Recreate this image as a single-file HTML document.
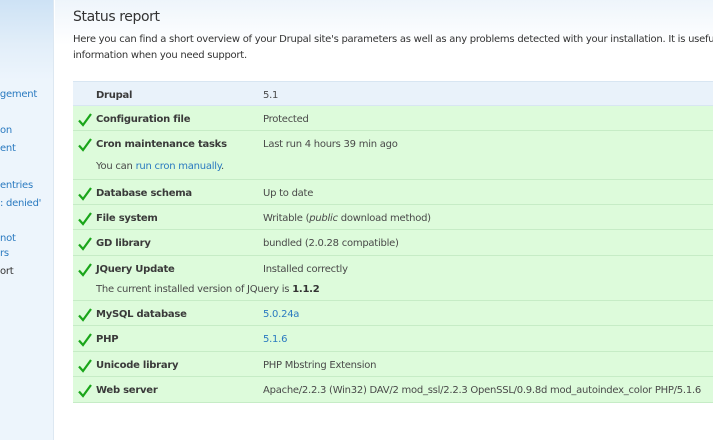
<!DOCTYPE html>
<html><head><meta charset="utf-8"><style>
*{margin:0;padding:0;box-sizing:border-box}
body{width:713px;height:440px;overflow:hidden;background:#fff;font-family:"DejaVu Sans",Verdana,sans-serif;font-size:10px;letter-spacing:-0.25px;color:#494949;position:relative}
#side{position:absolute;left:0;top:0;width:54px;height:440px;background:linear-gradient(#cde2f5 0,#e2eef9 45px,#edf5fc 80px);border-right:1px solid #dde8f2;overflow:hidden}
#side a{position:absolute;left:0;color:#2a7ac0;text-decoration:none;white-space:nowrap}
#main{position:absolute;left:55px;top:0;right:0;height:440px;background:linear-gradient(#eef5fb 0,#fff 45px)}
h1{position:absolute;left:73px;top:9px;font-size:14px;letter-spacing:-0.4px;font-weight:normal;color:#333;white-space:nowrap}
.p{position:absolute;left:73px;white-space:nowrap;color:#333}
.r{position:absolute;left:73px;width:640px;background:#ddfbdb;border-bottom:1px solid #c6ecc6;overflow:hidden}
.r b{position:absolute;left:23px;top:8px;color:#3a3a3a}
.r span.v{position:absolute;left:190px;top:8px;color:#494949;white-space:nowrap}
.r .x{position:absolute;left:23px;top:31px;color:#494949;white-space:nowrap}
.r svg{position:absolute;left:4px;top:6px}
a.l{color:#2a7ac0;text-decoration:none}
</style></head><body>
<div id="side">
<a style="top:89px;left:-6px">agement</a>
<a style="top:125px">on</a>
<a style="top:143px">ent</a>
<a style="top:180px">entries</a>
<a style="top:198px">: denied'</a>
<a style="top:233px">not</a>
<a style="top:248px">rs</a>
<a style="top:266px;color:#333">ort</a>
</div>
<div id="main"></div>
<h1>Status report</h1>
<div class="p" style="top:34px">Here you can find a short overview of your Drupal site's parameters as well as any problems detected with your installation. It is useful</div>
<div class="p" style="top:50px">information when you need support.</div>

<div class="r" style="top:81px;height:25px;background:#e9f2fa;border-top:1px solid #d8e6f2;border-bottom:1px solid #d8e6f2"><b>Drupal</b><span class="v">5.1</span></div>
<div class="r" style="top:106px;height:25px"><svg width="16" height="16" viewBox="0 0 16 16"><path d="M2 8.5L6 13L14 2" stroke="#1aa51a" stroke-width="2.2" fill="none"/></svg><b>Configuration file</b><span class="v">Protected</span></div>
<div class="r" style="top:131px;height:49px"><svg width="16" height="16" viewBox="0 0 16 16"><path d="M2 8.5L6 13L14 2" stroke="#1aa51a" stroke-width="2.2" fill="none"/></svg><b>Cron maintenance tasks</b><span class="v">Last run 4 hours 39 min ago</span><div class="x" style="top:30px">You can <a class="l">run cron manually</a>.</div></div>
<div class="r" style="top:180px;height:25px"><svg width="16" height="16" viewBox="0 0 16 16"><path d="M2 8.5L6 13L14 2" stroke="#1aa51a" stroke-width="2.2" fill="none"/></svg><b>Database schema</b><span class="v">Up to date</span></div>
<div class="r" style="top:205px;height:25px"><svg width="16" height="16" viewBox="0 0 16 16"><path d="M2 8.5L6 13L14 2" stroke="#1aa51a" stroke-width="2.2" fill="none"/></svg><b>File system</b><span class="v">Writable (<i>public</i> download method)</span></div>
<div class="r" style="top:230px;height:26px"><svg width="16" height="16" viewBox="0 0 16 16"><path d="M2 8.5L6 13L14 2" stroke="#1aa51a" stroke-width="2.2" fill="none"/></svg><b>GD library</b><span class="v">bundled (2.0.28 compatible)</span></div>
<div class="r" style="top:256px;height:45px"><svg width="16" height="16" viewBox="0 0 16 16"><path d="M2 8.5L6 13L14 2" stroke="#1aa51a" stroke-width="2.2" fill="none"/></svg><b>JQuery Update</b><span class="v">Installed correctly</span><div class="x" style="top:28px">The current installed version of JQuery is <strong style="color:#333">1.1.2</strong></div></div>
<div class="r" style="top:301px;height:25px"><svg width="16" height="16" viewBox="0 0 16 16"><path d="M2 8.5L6 13L14 2" stroke="#1aa51a" stroke-width="2.2" fill="none"/></svg><b>MySQL database</b><span class="v"><a class="l">5.0.24a</a></span></div>
<div class="r" style="top:326px;height:26px"><svg width="16" height="16" viewBox="0 0 16 16"><path d="M2 8.5L6 13L14 2" stroke="#1aa51a" stroke-width="2.2" fill="none"/></svg><b>PHP</b><span class="v"><a class="l">5.1.6</a></span></div>
<div class="r" style="top:352px;height:25px"><svg width="16" height="16" viewBox="0 0 16 16"><path d="M2 8.5L6 13L14 2" stroke="#1aa51a" stroke-width="2.2" fill="none"/></svg><b>Unicode library</b><span class="v">PHP Mbstring Extension</span></div>
<div class="r" style="top:377px;height:26px"><svg width="16" height="16" viewBox="0 0 16 16"><path d="M2 8.5L6 13L14 2" stroke="#1aa51a" stroke-width="2.2" fill="none"/></svg><b>Web server</b><span class="v">Apache/2.2.3 (Win32) DAV/2 mod_ssl/2.2.3 OpenSSL/0.9.8d mod_autoindex_color PHP/5.1.6</span></div>
</body></html>
